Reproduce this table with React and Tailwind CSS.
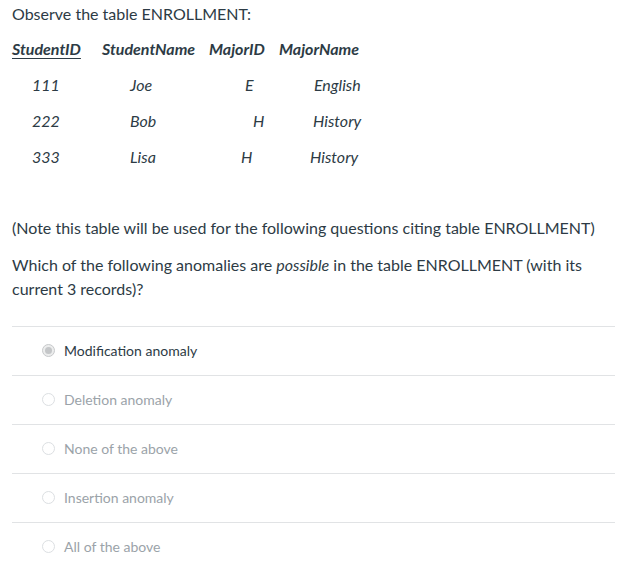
export default function App() {
  const rows = [
    ["111", "Joe", "E", "English", "pl-[20px]", "pl-[28px]", "pl-[36px]", "pl-[35px]"],
    ["222", "Bob", "H", "History", "pl-[20px]", "pl-[28px]", "pl-[44px]", "pl-[34px]"],
    ["333", "Lisa", "H", "History", "pl-[20px]", "pl-[28px]", "pl-[32px]", "pl-[31px]"],
  ];
  const options = [
    { label: "Modification anomaly", selected: true },
    { label: "Deletion anomaly" },
    { label: "None of the above" },
    { label: "Insertion anomaly" },
    { label: "All of the above" },
  ];
  return (
    <div
      className="w-[625px] h-[583px] bg-white text-[#2d3b45] pl-3 pr-[10px] pt-[2px]"
      style={{ fontFamily: "Lato, 'Noto Sans', sans-serif" }}
    >
      <p className="text-[16px] leading-6">Observe the table ENROLLMENT:</p>
      <div className="mt-[5px] grid grid-cols-[90px_107px_70px_90px] text-[16px] italic">
        <div className="h-[36px] flex items-center font-bold underline underline-offset-[3px]">StudentID</div>
        <div className="h-[36px] flex items-center font-bold">StudentName</div>
        <div className="h-[36px] flex items-center font-bold">MajorID</div>
        <div className="h-[36px] flex items-center font-bold">MajorName</div>
        {rows.map((r, i) => (
          <div key={i} className="contents">
            <div className={`h-[36px] flex items-center ${r[4]}`}>{r[0]}</div>
            <div className={`h-[36px] flex items-center ${r[5]}`}>{r[1]}</div>
            <div className={`h-[36px] flex items-center ${r[6]}`}>{r[2]}</div>
            <div className={`h-[36px] flex items-center ${r[7]}`}>{r[3]}</div>
          </div>
        ))}
      </div>
      <p className="mt-[41px] text-[16px] leading-6">
        (Note this table will be used for the following questions citing table ENROLLMENT)
      </p>
      <p className="mt-[13px] text-[16px] leading-6">
        Which of the following anomalies are <em>possible</em> in the table ENROLLMENT (with its current 3 records)?
      </p>
      <div className="mt-[25px]">
        {options.map((o, i) => (
          <div
            key={i}
            className="h-[49px] border-t border-[#e1e3e5] flex items-center pl-[30px] pb-[2px]"
          >
            <span
              className={`w-[13px] h-[13px] rounded-full border flex items-center justify-center ${
                o.selected ? "border-[#c7c9cb] bg-[#eceded]" : "border-[#dcdfe2] bg-white"
              }`}
            >
              {o.selected && <span className="w-[7px] h-[7px] rounded-full bg-[#c4c6c8]" />}
            </span>
            <span
              className={`ml-[9px] text-[14px] ${o.selected ? "text-[#2d3b45]" : "text-[#9ba3a9]"}`}
            >
              {o.label}
            </span>
          </div>
        ))}
      </div>
    </div>
  );
}
